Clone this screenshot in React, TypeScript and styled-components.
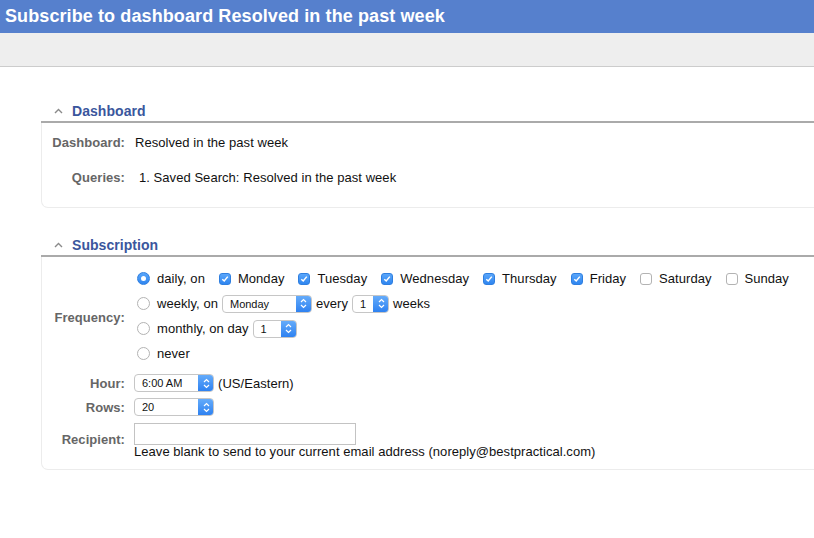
import React from "react";
import styled, { createGlobalStyle } from "styled-components";

const GlobalStyle = createGlobalStyle`
  html, body {
    margin: 0;
    padding: 0;
    background: #fff;
    overflow: hidden;
  }
  body {
    font-family: "Liberation Sans", Arial, Helvetica, sans-serif;
    font-size: 13px;
    letter-spacing: 0.05px;
    color: #111;
  }
`;

const TitleBar = styled.div`
  height: 33px;
  background: #5680cd;
  display: flex;
  align-items: center;
  padding-left: 5px;
  color: #fff;
  font-weight: bold;
  font-size: 18px;
  letter-spacing: 0.1px;
  white-space: nowrap;
`;

const MenuBar = styled.div`
  height: 33px;
  background: #eeeeee;
  border-bottom: 1px solid #cccccc;
`;

const Content = styled.div`
  padding-top: 33px;
`;

const Section = styled.section<{ $gap?: number }>`
  margin-left: 41px;
  margin-right: -20px;
  margin-bottom: ${(p) => p.$gap ?? 0}px;
`;

const SectionHeader = styled.div`
  display: flex;
  align-items: center;
  gap: 9px;
  height: 21px;
  padding-left: 13px;
  border-bottom: 2px solid #aaaaaa;
  color: #3a569d;
  font-weight: bold;
  font-size: 14px;
`;

const SectionBody = styled.div<{ $pt: number; $pb: number }>`
  border: 1px solid #ececec;
  border-top: none;
  border-radius: 0 0 7px 7px;
  padding: ${(p) => p.$pt}px 0 ${(p) => p.$pb}px 0;
  display: grid;
  grid-template-columns: 83px 1fr;
  column-gap: 9px;
  align-items: center;
`;

const Label = styled.div<{ $h?: number; $mt?: number }>`
  text-align: right;
  font-weight: bold;
  color: #666;
  white-space: nowrap;
  margin-top: ${(p) => p.$mt ?? 0}px;
  min-height: ${(p) => p.$h ?? 20}px;
  display: flex;
  align-items: center;
  justify-content: flex-end;
`;

const Value = styled.div<{ $indent?: number; $h?: number; $mt?: number }>`
  padding-left: ${(p) => p.$indent ?? 0}px;
  min-height: ${(p) => p.$h ?? 20}px;
  margin-top: ${(p) => p.$mt ?? 0}px;
  display: flex;
  align-items: center;
  white-space: nowrap;
`;

const FreqList = styled.div`
  display: flex;
  flex-direction: column;
  padding-left: 3px;
`;

const FreqRow = styled.div`
  height: 25px;
  display: flex;
  align-items: center;
  white-space: nowrap;
`;

const Option = styled.span<{ $gap?: number }>`
  display: inline-flex;
  align-items: center;
  gap: 7px;
  margin-right: ${(p) => p.$gap ?? 14}px;
`;

const Inline = styled.span`
  margin: 0 4px;
`;

const RadioDot = styled.span<{ $on?: boolean }>`
  width: 13px;
  height: 13px;
  border-radius: 50%;
  box-sizing: border-box;
  flex: none;
  display: inline-flex;
  align-items: center;
  justify-content: center;
  background: ${(p) => (p.$on ? "linear-gradient(#5aa6fa, #2f86f0)" : "#fff")};
  border: 1px solid ${(p) => (p.$on ? "#2f7fe0" : "#b3b3b3")};
  &::after {
    content: "";
    width: 5px;
    height: 5px;
    border-radius: 50%;
    background: #fff;
    display: ${(p) => (p.$on ? "block" : "none")};
  }
`;

const Box = styled.span<{ $on?: boolean }>`
  width: 12px;
  height: 12px;
  border-radius: 3px;
  box-sizing: border-box;
  flex: none;
  display: inline-flex;
  align-items: center;
  justify-content: center;
  background: ${(p) => (p.$on ? "linear-gradient(#5aa6fa, #2f86f0)" : "#fff")};
  border: 1px solid ${(p) => (p.$on ? "#2f7fe0" : "#b3b3b3")};
`;

const SelectBox = styled.span<{ $w: number }>`
  position: relative;
  display: inline-flex;
  align-items: center;
  box-sizing: border-box;
  width: ${(p) => p.$w}px;
  height: 18px;
  border: 1px solid #c6c6c6;
  border-radius: 4px;
  background: #fff;
  font-size: 11px;
  letter-spacing: 0;
  padding-left: 7px;
  overflow: hidden;
  flex: none;
`;

const SelectArrow = styled.span`
  position: absolute;
  right: -1px;
  top: -1px;
  bottom: -1px;
  width: 16px;
  border-radius: 0 4px 4px 0;
  background: linear-gradient(#68aefb, #2b7ff0);
  display: flex;
  align-items: center;
  justify-content: center;
`;

const TextInput = styled.div`
  width: 222px;
  height: 22px;
  box-sizing: border-box;
  border: 1px solid #c3c3c3;
  margin-top: 4px;
`;

const Help = styled.div`
  height: 14px;
  line-height: 14px;
  white-space: nowrap;
`;

const Chevron = () => (
  <svg width="9" height="6" viewBox="0 0 9 6">
    <polyline points="1,5 4.5,1.5 8,5" fill="none" stroke="#8a8a8a" strokeWidth="1.4" />
  </svg>
);

const Check = () => (
  <svg width="8" height="8" viewBox="0 0 8 8">
    <polyline points="1.3,4.2 3.2,6 6.8,1.6" fill="none" stroke="#fff" strokeWidth="1.5" />
  </svg>
);

const UpDown = () => (
  <svg width="7" height="11" viewBox="0 0 7 11">
    <polyline points="1,4 3.5,1.5 6,4" fill="none" stroke="#fff" strokeWidth="1.2" />
    <polyline points="1,7 3.5,9.5 6,7" fill="none" stroke="#fff" strokeWidth="1.2" />
  </svg>
);

const Select = ({ w, value }: { w: number; value: string }) => (
  <SelectBox $w={w}>
    {value}
    <SelectArrow>
      <UpDown />
    </SelectArrow>
  </SelectBox>
);

const days = [
  { name: "Monday", on: true },
  { name: "Tuesday", on: true },
  { name: "Wednesday", on: true },
  { name: "Thursday", on: true },
  { name: "Friday", on: true },
  { name: "Saturday", on: false },
  { name: "Sunday", on: false },
];

export default function App() {
  return (
    <>
      <GlobalStyle />
      <TitleBar>Subscribe to dashboard Resolved in the past week</TitleBar>
      <MenuBar />
      <Content>
        <Section $gap={26}>
          <SectionHeader>
            <Chevron />
            Dashboard
          </SectionHeader>
          <SectionBody $pt={9} $pb={20}>
            <Label>Dashboard:</Label>
            <Value $indent={1}>Resolved in the past week</Value>
            <Label $mt={15}>Queries:</Label>
            <Value $mt={15} $indent={5}>
              1. Saved Search: Resolved in the past week
            </Value>
          </SectionBody>
        </Section>

        <Section>
          <SectionHeader>
            <Chevron />
            Subscription
          </SectionHeader>
          <SectionBody $pt={9} $pb={10}>
            <Label $mt={3}>Frequency:</Label>
            <FreqList>
              <FreqRow>
                <Option>
                  <RadioDot $on />
                  daily, on
                </Option>
                {days.map((d) => (
                  <Option key={d.name}>
                    <Box $on={d.on}>{d.on && <Check />}</Box>
                    {d.name}
                  </Option>
                ))}
              </FreqRow>
              <FreqRow>
                <Option $gap={4}>
                  <RadioDot />
                  weekly, on
                </Option>
                <Select w={90} value="Monday" />
                <Inline>every</Inline>
                <Select w={37} value="1" />
                <Inline>weeks</Inline>
              </FreqRow>
              <FreqRow>
                <Option $gap={4}>
                  <RadioDot />
                  monthly, on day
                </Option>
                <Select w={44} value="1" />
              </FreqRow>
              <FreqRow>
                <Option>
                  <RadioDot />
                  never
                </Option>
              </FreqRow>
            </FreqList>

            <Label $h={24} $mt={5}>Hour:</Label>
            <Value $h={24} $mt={5}>
              <Select w={80} value="6:00 AM" />
              <Inline>(US/Eastern)</Inline>
            </Value>
            <Label $h={24}>Rows:</Label>
            <Value $h={24}>
              <Select w={80} value="20" />
            </Value>
            <Label $h={40}>Recipient:</Label>
            <div>
              <TextInput />
              <Help>
                Leave blank to send to your current email address
                (noreply@bestpractical.com)
              </Help>
            </div>
          </SectionBody>
        </Section>
      </Content>
    </>
  );
}
